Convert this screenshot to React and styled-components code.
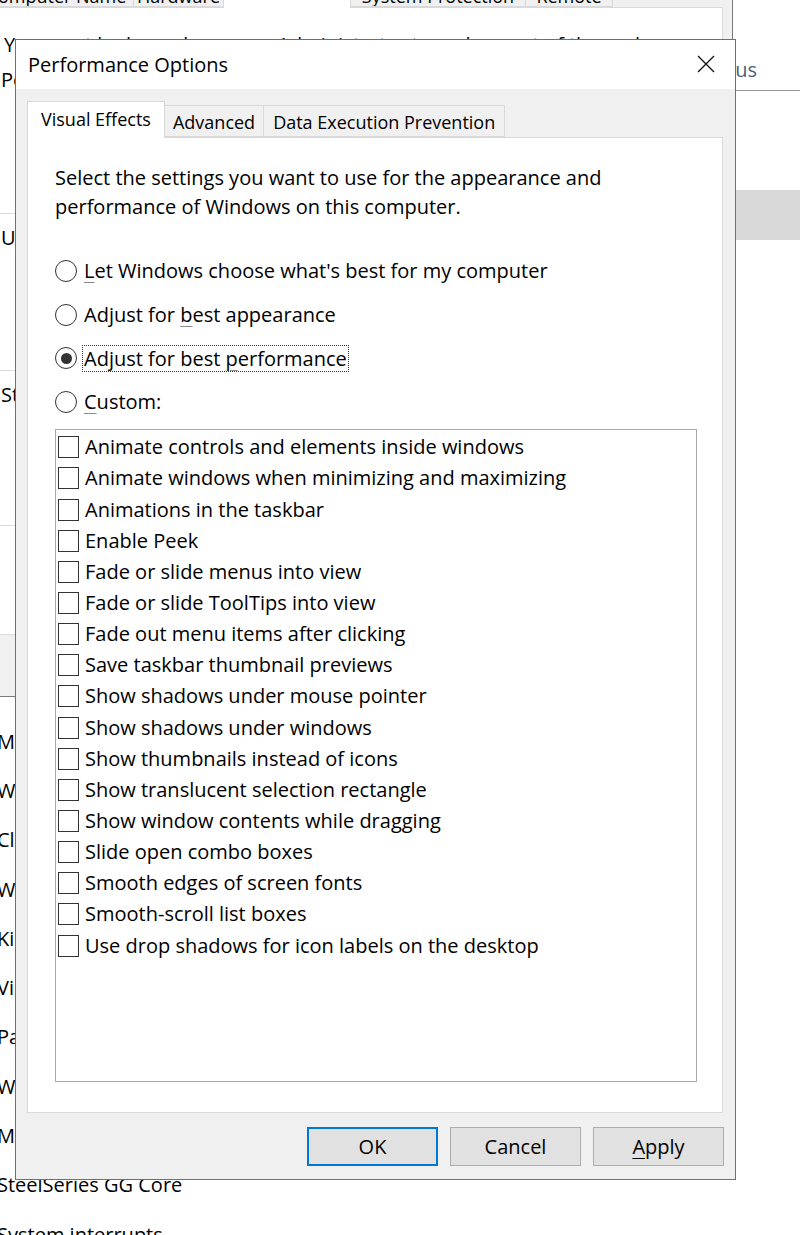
import React from 'react';
import styled, { createGlobalStyle } from 'styled-components';

const GlobalStyle = createGlobalStyle`
  html, body { margin: 0; padding: 0; background: #fff; }
  body {
    font-family: "Open Sans", "Noto Sans", "Liberation Sans", sans-serif;
    color: #000;
    overflow: hidden;
  }
  * { box-sizing: border-box; }
`;

const Desktop = styled.div`
  position: relative;
  width: 800px;
  height: 1235px;
  overflow: hidden;
  background: #fff;
  font-size: 20px;
`;

/* ---------- Task Manager (furthest back) ---------- */
const TaskWin = styled.div`
  position: absolute;
  left: -3px;
  top: 0;
  width: 803px;
  height: 1235px;
  background: #fff;
  display: flex;
  flex-direction: column;
  z-index: 1;
`;
const TaskHeader = styled.div`
  flex: none;
  height: 91px;
  display: flex;
  padding-top: 56px;
  border-bottom: 1px solid #9a9a9a;
`;
const HeaderName = styled.div`
  width: 702px;
  flex: none;
`;
const HeaderCell = styled.div`
  line-height: 28px;
  color: #4c607a;
`;
const ProcRow = styled.div`
  flex: none;
  height: ${p => p.$h}px;
  display: flex;
  align-items: center;
  background: ${p => (p.$selected ? '#d9d9d9' : 'transparent')};
  white-space: nowrap;
  line-height: 28px;
`;
const GroupRow = styled.div`
  flex: none;
  height: 32px;
`;

/* ---------- System Properties (middle) ---------- */
const SysWin = styled.div`
  position: absolute;
  left: -30px;
  top: -22px;
  width: 763px;
  height: 719px;
  background: #f0f0f0;
  border: 1px solid #7a7a7a;
  display: flex;
  flex-direction: column;
  padding: 0 9px;
  z-index: 2;
`;
const SysTabs = styled.div`
  flex: none;
  height: 28px;
  display: flex;
  align-items: flex-end;
`;
const SysTab = styled.div`
  width: ${p => p.$w}px;
  height: ${p => (p.$active ? 29 : 24)}px;
  margin-bottom: ${p => (p.$active ? -1 : 0)}px;
  margin-left: -1px;
  background: ${p => (p.$active ? '#fff' : '#f0f0f0')};
  border: 1px solid #d9d9d9;
  border-bottom: ${p => (p.$active ? 'none' : '1px solid #d9d9d9')};
  font-size: 18px;
  line-height: 24px;
  text-align: center;
  white-space: nowrap;
  overflow: hidden;
  position: relative;
  z-index: ${p => (p.$active ? 2 : 1)};
`;
const SysPanel = styled.div`
  flex: none;
  height: 628px;
  background: #fff;
  border: 1px solid #d9d9d9;
  padding: 23px 0 0 23px;
  display: flex;
  flex-direction: column;
  white-space: nowrap;
`;
const SysLine = styled.div`
  line-height: 28px;
`;
const GroupBox = styled.div`
  height: ${p => p.$h}px;
  margin-top: ${p => p.$mt}px;
  margin-left: -23px;
  padding-left: 20px;
  border-bottom: 1px solid #dcdcdc;
`;
const SysFooter = styled.div`
  flex: none;
  height: 61px;
  background: #f0f0f0;
`;

/* ---------- Performance Options dialog (front) ---------- */
const Dialog = styled.div`
  position: absolute;
  left: 15px;
  top: 39px;
  width: 721px;
  height: 1141px;
  border: 1px solid #707070;
  background: #f0f0f0;
  display: flex;
  flex-direction: column;
  z-index: 3;
  font-size: 20px;
`;
const TitleBar = styled.div`
  flex: none;
  height: 49px;
  background: #fff;
  display: flex;
  align-items: center;
  justify-content: space-between;
  padding-left: 12px;
`;
const Title = styled.div`
  line-height: 28px;
  font-size: 20px;
`;
const CloseButton = styled.div`
  width: 46px;
  height: 49px;
  margin-right: 6px;
  display: flex;
  align-items: center;
  justify-content: center;
  margin-top: -2px;
`;
const Body = styled.div`
  flex: 1;
  display: flex;
  flex-direction: column;
  padding: 12px 12px 0 11px;
`;
const TabRow = styled.div`
  flex: none;
  height: 36px;
  display: flex;
  align-items: flex-end;
`;
const Tab = styled.div`
  height: ${p => (p.$active ? 37 : 32)}px;
  margin-bottom: ${p => (p.$active ? -1 : 0)}px;
  margin-left: ${p => (p.$first ? 0 : -1)}px;
  padding: 0 ${p => p.$px}px;
  background: ${p => (p.$active ? '#fff' : '#f0f0f0')};
  border: 1px solid #d9d9d9;
  border-bottom: ${p => (p.$active ? 'none' : '1px solid #d9d9d9')};
  font-size: 18px;
  line-height: ${p => (p.$active ? 34 : 32)}px;
  white-space: nowrap;
  position: relative;
  z-index: ${p => (p.$active ? 2 : 1)};
`;
const Panel = styled.div`
  flex: none;
  height: 976px;
  background: #fff;
  border: 1px solid #d9d9d9;
  padding: 25px 25px 30px 27px;
  display: flex;
  flex-direction: column;
`;
const Desc = styled.div`
  line-height: 29px;
  margin-bottom: 28px;
  white-space: nowrap;
`;
const RadioRow = styled.div`
  height: 43.7px;
  display: flex;
  align-items: center;
  flex: none;
`;
const RadioCircle = styled.span`
  width: 22px;
  height: 22px;
  border-radius: 50%;
  border: 1px solid #333;
  background: #fff;
  flex: none;
  display: flex;
  align-items: center;
  justify-content: center;
  &::after {
    content: '';
    width: 11px;
    height: 11px;
    border-radius: 50%;
    background: #333;
    display: ${p => (p.$checked ? 'block' : 'none')};
  }
`;
const RadioLabel = styled.span`
  margin-left: 5px;
  padding: 0 1px;
  line-height: 25px;
  border: 1px dotted ${p => (p.$focus ? '#333' : 'transparent')};
  white-space: nowrap;
`;
const Key = styled.span`
  text-decoration: underline;
  text-decoration-color: ${p => p.$color || '#8a8a8a'};
  text-decoration-thickness: 1px;
  text-underline-offset: 4px;
`;
const List = styled.div`
  flex: 1;
  margin-top: 5px;
  border: 1px solid #a8a8a8;
  background: #fff;
  padding: 2px 0 0 2px;
  display: flex;
  flex-direction: column;
`;
const CheckRow = styled.div`
  height: 31.15px;
  flex: none;
  display: flex;
  align-items: center;
`;
const CheckBox = styled.span`
  width: 21px;
  height: 22px;
  border: 1px solid #333;
  background: #fff;
  flex: none;
`;
const CheckText = styled.span`
  margin-left: 6px;
  line-height: 28px;
  white-space: nowrap;
`;
const Footer = styled.div`
  flex: none;
  height: 65px;
  display: flex;
  justify-content: flex-end;
  align-items: flex-start;
  gap: 12px;
  padding-top: 14px;
  margin-right: -1px;
`;
const Button = styled.div`
  width: 131px;
  height: 39px;
  background: #e1e1e1;
  border: 1px solid ${p => (p.$default ? '#0078d7' : '#adadad')};
  box-shadow: ${p => (p.$default ? 'inset 0 0 0 1px #0078d7' : 'none')};
  display: flex;
  align-items: center;
  justify-content: center;
  font-size: 20px;
  line-height: 28px;
`;

const effects = [
  'Animate controls and elements inside windows',
  'Animate windows when minimizing and maximizing',
  'Animations in the taskbar',
  'Enable Peek',
  'Fade or slide menus into view',
  'Fade or slide ToolTips into view',
  'Fade out menu items after clicking',
  'Save taskbar thumbnail previews',
  'Show shadows under mouse pointer',
  'Show shadows under windows',
  'Show thumbnails instead of icons',
  'Show translucent selection rectangle',
  'Show window contents while dragging',
  'Slide open combo boxes',
  'Smooth edges of screen fonts',
  'Smooth-scroll list boxes',
  'Use drop shadows for icon labels on the desktop',
];

const processes = [
  'Microsoft Edge',
  'Windows Explorer',
  'Client Server Runtime Process',
  'Windows Shell Experience Host',
  'Killer Network Service',
  'Virtual Disk Service',
  'Paint',
  'WMI Provider Host',
  'Microsoft Teams',
  'SteelSeries GG Core',
  'System interrupts',
];

function CloseIcon() {
  return (
    <svg width="18" height="18" viewBox="0 0 18 18">
      <path d="M1 1 L17 17 M17 1 L1 17" stroke="#111" strokeWidth="1.3" fill="none" />
    </svg>
  );
}

export default function App() {
  return (
    <Desktop>
      <GlobalStyle />

      <TaskWin>
        <TaskHeader>
          <HeaderName />
          <HeaderCell>Status</HeaderCell>
        </TaskHeader>
        {Array.from({ length: 12 }).map((_, i) => (
          <ProcRow key={'a' + i} $h={49.5} $selected={i === 2} />
        ))}
        <GroupRow />
        {processes.map(name => (
          <ProcRow key={name} $h={49.3}>{name}</ProcRow>
        ))}
      </TaskWin>

      <SysWin>
        <SysTabs>
          <SysTab $w={155}>Computer Name</SysTab>
          <SysTab $w={91}>Hardware</SysTab>
          <SysTab $w={128} $active>Advanced</SysTab>
          <SysTab $w={176}>System Protection</SysTab>
          <SysTab $w={88}>Remote</SysTab>
        </SysTabs>
        <SysPanel>
          <SysLine>You must be logged on as an Administrator to make most of these changes.</SysLine>
          <GroupBox $h={148} $mt={7}>
            <SysLine>Performance</SysLine>
          </GroupBox>
          <GroupBox $h={147} $mt={10}>
            <SysLine>User Profiles</SysLine>
          </GroupBox>
          <GroupBox $h={145} $mt={10}>
            <SysLine>Startup and Recovery</SysLine>
          </GroupBox>
        </SysPanel>
        <SysFooter />
      </SysWin>

      <Dialog>
        <TitleBar>
          <Title>Performance Options</Title>
          <CloseButton>
            <CloseIcon />
          </CloseButton>
        </TitleBar>
        <Body>
          <TabRow>
            <Tab $active $first $px={13}>Visual Effects</Tab>
            <Tab $px={8}>Advanced</Tab>
            <Tab $px={9}>Data Execution Prevention</Tab>
          </TabRow>
          <Panel>
            <Desc>
              Select the settings you want to use for the appearance and
              <br />
              performance of Windows on this computer.
            </Desc>
            <RadioRow>
              <RadioCircle />
              <RadioLabel><Key>L</Key>et Windows choose what's best for my computer</RadioLabel>
            </RadioRow>
            <RadioRow>
              <RadioCircle />
              <RadioLabel>Adjust for <Key>b</Key>est appearance</RadioLabel>
            </RadioRow>
            <RadioRow>
              <RadioCircle $checked />
              <RadioLabel $focus>Adjust for best <Key>p</Key>erformance</RadioLabel>
            </RadioRow>
            <RadioRow>
              <RadioCircle />
              <RadioLabel><Key>C</Key>ustom:</RadioLabel>
            </RadioRow>
            <List>
              {effects.map(e => (
                <CheckRow key={e}>
                  <CheckBox />
                  <CheckText>{e}</CheckText>
                </CheckRow>
              ))}
            </List>
          </Panel>
          <Footer>
            <Button $default>OK</Button>
            <Button>Cancel</Button>
            <Button><Key $color="#000">A</Key>pply</Button>
          </Footer>
        </Body>
      </Dialog>
    </Desktop>
  );
}
